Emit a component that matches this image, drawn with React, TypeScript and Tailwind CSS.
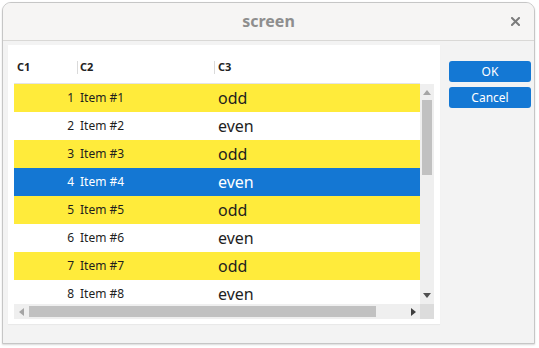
import React from "react";

const rows = Array.from({ length: 8 }, (_, i) => i + 1);

export default function App() {
  return (
    <div
      className="w-[539px] h-[348px] bg-white pt-[2px] pl-[2px]"
      style={{ fontFamily: '"Noto Sans", "Open Sans", sans-serif' }}
    >
      <div className="w-[533px] h-[342px] border border-[#c6c6c6] rounded-t-[9px] bg-[#f3f3f3] overflow-hidden flex flex-col shadow-[0_1px_2px_rgba(0,0,0,0.15)]">
        {/* Title bar */}
        <div className="h-[38px] shrink-0 grid grid-cols-[1fr_auto_1fr] items-center bg-[#f6f5f4] border-b border-[#d9d8d6]">
          <div />
          <div className="text-[16px] font-bold text-[#8e8e8e] leading-none pb-[1px]">screen</div>
          <div className="flex justify-end pr-[14px]">
            <svg width="9" height="9" viewBox="0 0 9 9">
              <path d="M1 1 L8 8 M8 1 L1 8" stroke="#7c7c7c" strokeWidth="2" strokeLinecap="square" />
            </svg>
          </div>
        </div>
        {/* Body */}
        <div className="flex flex-row pt-[4px] pl-[5px]">
          {/* Panel */}
          <div className="w-[432px] h-[279px] bg-white pt-[6px] px-[6px] pb-[5px] flex flex-col shadow-[0_1px_1px_rgba(0,0,0,0.04)]">
            {/* Header */}
            <div className="h-[33px] w-[406px] flex items-center border-b border-[#e4e4e4] text-[11px] font-bold text-[#222]">
              <div className="w-[63px] pl-[3px]">C1</div>
              <div className="w-px h-[13px] bg-[#dadada]" />
              <div className="w-[136px] pl-[2px]">C2</div>
              <div className="w-px h-[13px] bg-[#dadada]" />
              <div className="pl-[3px]">C3</div>
            </div>
            {/* Rows + vertical scrollbar */}
            <div className="flex h-[220px]">
              <div className="w-[406px] h-[220px] overflow-hidden">
                {rows.map((n) => {
                  const selected = n === 4;
                  const odd = n % 2 === 1;
                  const bg = selected ? "bg-[#1477d3]" : odd ? "bg-[#ffeb3b]" : "bg-white";
                  const fg = selected ? "text-white" : "text-[#1e1e1e]";
                  return (
                    <div key={n} className={`h-[28px] flex items-center ${bg} ${fg}`}>
                      <div className="w-[63px] pr-[3px] text-right text-[12px]">{n}</div>
                      <div className="w-[137px] pl-[3px] text-[12px]">Item #{n}</div>
                      <div className="pl-[4px] text-[16px] leading-none pb-[1px]">{odd ? "odd" : "even"}</div>
                    </div>
                  );
                })}
              </div>
              <div className="w-[14px] h-[220px] bg-[#efefef] flex flex-col items-center">
                <div className="h-[16px] flex items-center justify-center">
                  <svg width="8" height="5" viewBox="0 0 8 5">
                    <path d="M0 5 L4 0 L8 5 Z" fill="#a5a5a5" />
                  </svg>
                </div>
                <div className="w-[10px] h-[75px] bg-[#c1c1c1]" />
                <div className="flex-1" />
                <div className="h-[16px] flex items-center justify-center pb-[2px]">
                  <svg width="8" height="5" viewBox="0 0 8 5">
                    <path d="M0 0 L8 0 L4 5 Z" fill="#505050" />
                  </svg>
                </div>
              </div>
            </div>
            {/* Horizontal scrollbar */}
            <div className="flex h-[15px]">
              <div className="w-[406px] h-[15px] bg-[#efefef] flex items-center">
                <div className="w-[15px] flex items-center justify-center">
                  <svg width="5" height="8" viewBox="0 0 5 8">
                    <path d="M5 0 L0 4 L5 8 Z" fill="#a5a5a5" />
                  </svg>
                </div>
                <div className="w-[347px] h-[11px] bg-[#c1c1c1]" />
                <div className="flex-1 flex items-center justify-end pr-[4px]">
                  <svg width="5" height="8" viewBox="0 0 5 8">
                    <path d="M0 0 L5 4 L0 8 Z" fill="#404040" />
                  </svg>
                </div>
              </div>
              <div className="w-[14px] h-[15px] bg-[#dcdcdc]" />
            </div>
          </div>
          {/* Buttons */}
          <div className="ml-[9px] mt-[16px] flex flex-col gap-[5px]">
            <button className="w-[82px] h-[21px] rounded-[3px] bg-[#1478d4] text-white text-[12px] leading-none flex items-center justify-center">
              OK
            </button>
            <button className="w-[82px] h-[21px] rounded-[3px] bg-[#1478d4] text-white text-[12px] leading-none flex items-center justify-center">
              Cancel
            </button>
          </div>
        </div>
      </div>
    </div>
  );
}
